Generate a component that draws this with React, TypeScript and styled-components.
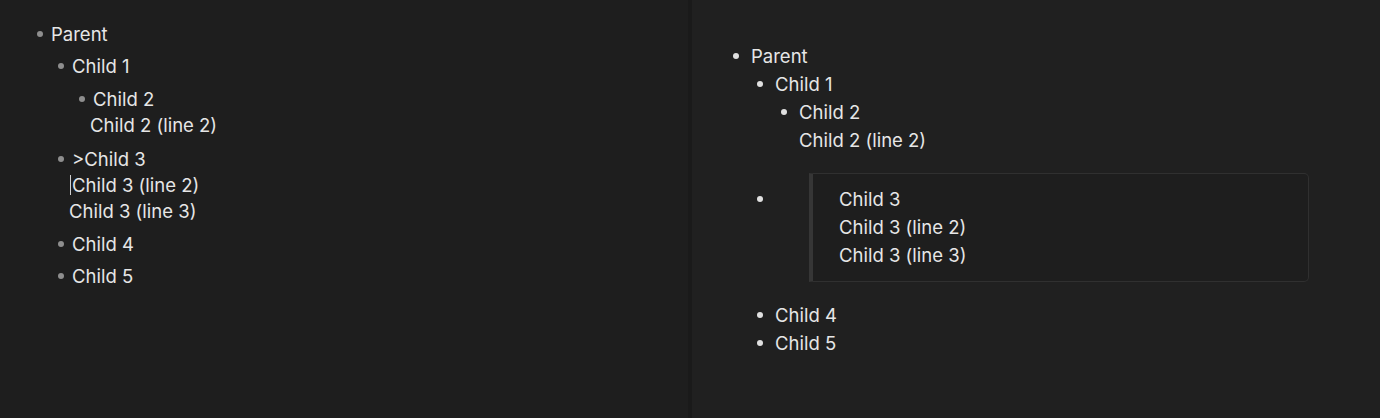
import React from 'react';
import styled, { createGlobalStyle } from 'styled-components';

const GlobalStyle = createGlobalStyle`
  html, body {
    margin: 0;
    padding: 0;
    background: #1e1e1e;
  }
  body {
    font-family: Inter, "Noto Sans", sans-serif;
    font-size: 18.5px;
    color: #e6e6e6;
  }
`;

const Workspace = styled.div`
  display: grid;
  grid-template-columns: 688px 4px 1fr;
  width: 1380px;
  height: 418px;
  overflow: hidden;
`;

const SourcePane = styled.section`
  background: #1e1e1e;
  padding: 18px 0 0 37px;
`;

const Divider = styled.div`
  background: #1a1a1a;
`;

const PreviewPane = styled.section`
  background: #202020;
  padding: 42px 71px 0 39px;
`;

/* ---------- source (editing) view ---------- */

const SourceItem = styled.div<{ $multi?: boolean }>`
  padding: ${(p) => (p.$multi ? '4px 0' : '3px 0')};
`;

const SourceLine = styled.div<{ $indent: number }>`
  display: flex;
  align-items: center;
  height: 26px;
  line-height: 26px;
  padding-left: ${(p) => p.$indent}px;
  white-space: pre;
`;

const SourceBullet = styled.span`
  flex: none;
  width: 14px;
  display: flex;
  align-items: center;

  &::before {
    content: '';
    width: 6px;
    height: 6px;
    border-radius: 50%;
    background: #8e8e8e;
  }
`;

const Caret = styled.span`
  display: inline-block;
  width: 1px;
  height: 20px;
  margin-right: 1px;
  background: #d0d0d0;
`;

/* ---------- reading view ---------- */

const List = styled.div<{ $nested?: boolean }>`
  display: flex;
  flex-direction: column;
  padding-left: ${(p) => (p.$nested ? 4 : 0)}px;
`;

const Item = styled.div`
  display: flex;
  align-items: flex-start;
`;

const Marker = styled.span<{ $offset?: number }>`
  flex: none;
  width: 20px;
  height: 28px;
  margin-top: ${(p) => p.$offset ?? 0}px;
  display: flex;
  align-items: center;

  &::before {
    content: '';
    width: 6px;
    height: 6px;
    margin-left: 2px;
    border-radius: 50%;
    background: #e0e0e0;
  }
`;

const Body = styled.div`
  flex: 1;
  min-width: 0;
`;

const Text = styled.div`
  line-height: 28px;
  white-space: pre;
`;

const Quote = styled.blockquote`
  margin: 19px 0 19px 34px;
  padding: 11px 26px 12px;
  background: #1e1e1e;
  border: 1px solid #303030;
  border-left: 4px solid #363636;
  border-radius: 0 5px 5px 0;
`;

const App: React.FC = () => (
  <>
    <GlobalStyle />
    <Workspace>
      <SourcePane>
        <SourceItem>
          <SourceLine $indent={0}>
            <SourceBullet />
            Parent
          </SourceLine>
        </SourceItem>
        <SourceItem>
          <SourceLine $indent={21}>
            <SourceBullet />
            Child 1
          </SourceLine>
        </SourceItem>
        <SourceItem $multi>
          <SourceLine $indent={42}>
            <SourceBullet />
            Child 2
          </SourceLine>
          <SourceLine $indent={53}>Child 2 (line 2)</SourceLine>
        </SourceItem>
        <SourceItem $multi>
          <SourceLine $indent={21}>
            <SourceBullet />
            {'>Child 3'}
          </SourceLine>
          <SourceLine $indent={33}>
            <Caret />
            Child 3 (line 2)
          </SourceLine>
          <SourceLine $indent={32}>Child 3 (line 3)</SourceLine>
        </SourceItem>
        <SourceItem>
          <SourceLine $indent={21}>
            <SourceBullet />
            Child 4
          </SourceLine>
        </SourceItem>
        <SourceItem>
          <SourceLine $indent={21}>
            <SourceBullet />
            Child 5
          </SourceLine>
        </SourceItem>
      </SourcePane>

      <Divider />

      <PreviewPane>
        <List>
          <Item>
            <Marker />
            <Body>
              <Text>Parent</Text>
              <List $nested>
                <Item>
                  <Marker />
                  <Body>
                    <Text>Child 1</Text>
                    <List $nested>
                      <Item>
                        <Marker />
                        <Body>
                          <Text>Child 2</Text>
                          <Text>Child 2 (line 2)</Text>
                        </Body>
                      </Item>
                    </List>
                  </Body>
                </Item>
                <Item>
                  <Marker $offset={31} />
                  <Body>
                    <Quote>
                      <Text>Child 3</Text>
                      <Text>Child 3 (line 2)</Text>
                      <Text>Child 3 (line 3)</Text>
                    </Quote>
                  </Body>
                </Item>
                <Item>
                  <Marker />
                  <Body>
                    <Text>Child 4</Text>
                  </Body>
                </Item>
                <Item>
                  <Marker />
                  <Body>
                    <Text>Child 5</Text>
                  </Body>
                </Item>
              </List>
            </Body>
          </Item>
        </List>
      </PreviewPane>
    </Workspace>
  </>
);

export default App;
